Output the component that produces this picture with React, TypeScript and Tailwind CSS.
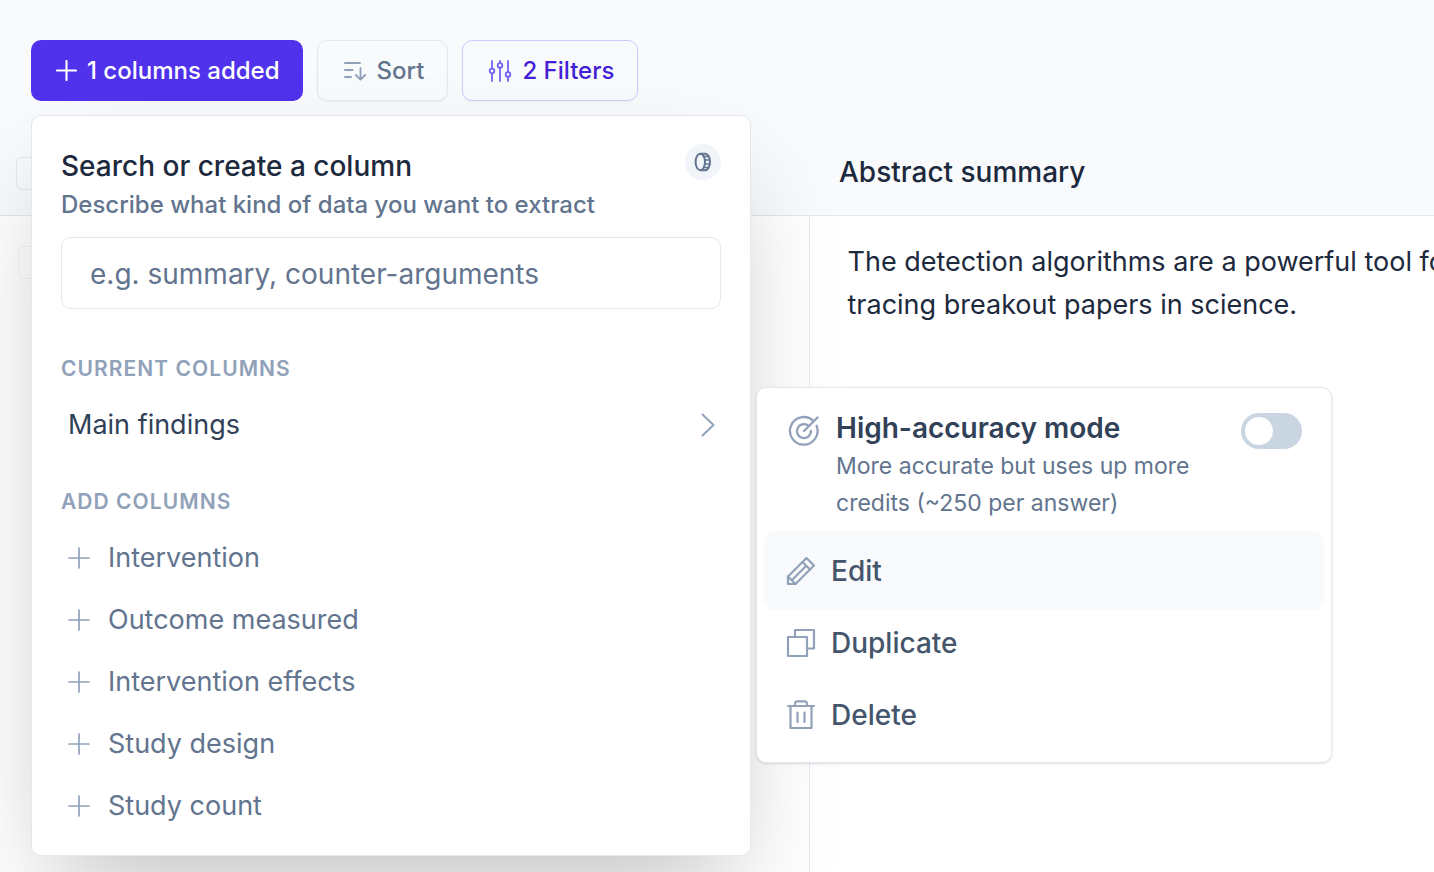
import type { ReactNode } from "react";

const suggestions = [
  "Intervention",
  "Outcome measured",
  "Intervention effects",
  "Study design",
  "Study count",
];

function Icon({ className, box, children, width = 2 }: { className: string; box: string; children: ReactNode; width?: number }) {
  return (
    <svg
      aria-hidden="true"
      className={className}
      viewBox={box}
      fill="none"
      stroke="currentColor"
      strokeWidth={width}
      strokeLinecap="round"
      strokeLinejoin="round"
    >
      {children}
    </svg>
  );
}

function PlusIcon({ className, width }: { className: string; width: number }) {
  return (
    <Icon className={className} box="0 0 22 22" width={width}>
      <path d="M11 1v20M1 11h20" />
    </Icon>
  );
}

function SortIcon() {
  return (
    <Icon className="h-6 w-6 shrink-0 text-slate-400" box="0 0 24 24">
      <path d="M2 4h15M2 11h7.500M2 18h6" />
      <path d="M17.500 9v11.500M12.800 16l4.700 4.700 4.700-4.700" strokeWidth={1.800} />
    </Icon>
  );
}

function FiltersIcon() {
  return (
    <Icon className="h-6 w-6 shrink-0 text-[#7263f0]" box="0 0 24 24" width={1.800}>
      <path d="M4 2v7.600M4 14.400v7.600M12 2v1.900M12 8.700V22M20 2v11M20 17.800V22" />
      <circle cx="4" cy="12" r="2.300" />
      <circle cx="12" cy="6.400" r="2.300" />
      <circle cx="20" cy="15.400" r="2.300" />
    </Icon>
  );
}

function CoinIcon() {
  return (
    <Icon className="h-5 w-5" box="0 0 20 20" width={2}>
      <ellipse cx="7.300" cy="10" rx="4.700" ry="8.300" />
      <path d="M7.500 1.700h4.500c2.800 0 5 3.700 5 8.300s-2.200 8.300-5 8.300H7.500" />
      <path d="M11 4.500h4M12.300 8h4.500M12.300 12h4.500M11 15.500h4" strokeWidth={1.400} />
    </Icon>
  );
}

function TargetIcon() {
  return (
    <Icon className="h-8 w-8" box="0 0 32 32" width={2.300}>
      <path d="M25.200 5.800A13.800 13.800 0 1 0 28.600 10.800" />
      <path d="M19.800 10.200A7 7 0 1 0 23 15.800" />
      <path d="M16 16 29.500 2.500" />
    </Icon>
  );
}

function PencilIcon() {
  return (
    <Icon className="h-8 w-8" box="0 0 32 32" width={2.200}>
      <path d="M3 21.500 21.500 3l7.500 7.500L10.500 29H3z" />
      <path d="M3 21.500l7.500 7.500M17.500 7l7.500 7.500M6.800 25.200 21.200 10.800" />
    </Icon>
  );
}

function DuplicateIcon() {
  return (
    <Icon className="h-8 w-8" box="0 0 32 32" width={2.200}>
      <path d="M3 10h19v19H3z" />
      <path d="M10 10V3h19v18.500h-7" />
    </Icon>
  );
}

function TrashIcon() {
  return (
    <Icon className="h-8 w-8" box="0 0 32 32" width={2.200}>
      <path d="M3 7h26M5.500 7v22h21V7M10 7V4.500a2.200 2.200 0 0 1 2.200-2.200h7.600A2.200 2.200 0 0 1 22 4.500V7M12.500 13.500v9.500M19.500 13.500v9.500" />
    </Icon>
  );
}

function MenuItem({ icon, label, active = false }: { icon: ReactNode; label: string; active?: boolean }) {
  return (
    <button
      type="button"
      className={`flex h-[79px] w-full items-center gap-[14px] rounded-[10px] px-[21px] text-[28px] font-medium text-slate-600 ${active ? "bg-slate-50" : ""}`}
    >
      <span className="text-slate-400">{icon}</span>
      {label}
    </button>
  );
}

function ColumnMenu() {
  return (
    <div className="absolute top-[271px] left-[724px] w-[576px] rounded-[10px] border border-slate-200 bg-white px-[7px] pb-2 shadow-sm">
      <div className="flex items-start pt-5 pr-[22px] pb-[9px] pl-6">
        <span className="mt-[7px] text-slate-400">
          <TargetIcon />
        </span>
        <label htmlFor="accuracy" className="ml-4 flex-1">
          <span className="block text-[28px] leading-10 font-semibold text-slate-700">High-accuracy mode</span>
          <span className="block max-w-[370px] text-[23px] leading-[37px] text-slate-500">
            More accurate but uses up more credits (~250 per answer)
          </span>
        </label>
        <input
          id="accuracy"
          type="checkbox"
          role="switch"
          className="mt-[5px] flex h-9 w-[61px] shrink-0 appearance-none items-center rounded-full bg-slate-300 px-1 before:h-7 before:w-7 before:rounded-full before:bg-white before:content-[''] checked:justify-end checked:bg-indigo-600"
        />
      </div>
      <div className="-space-y-[7px]">
        <MenuItem icon={<PencilIcon />} label="Edit" active />
        <MenuItem icon={<DuplicateIcon />} label="Duplicate" />
        <MenuItem icon={<TrashIcon />} label="Delete" />
      </div>
    </div>
  );
}

function ColumnPanel() {
  return (
    <section className="absolute top-full left-0 z-10 mt-[14px] w-[720px] rounded-[10px] border border-slate-200 bg-white px-[29px] pt-7 pb-[18px] shadow-[0_50px_100px_-24px_rgba(0,0,0,0.25)]">
      <div className="flex items-start justify-between">
        <div>
          <h2 className="text-[28px] leading-[44px] font-medium text-slate-800">Search or create a column</h2>
          <p className="text-2xl leading-[34px] font-medium text-slate-500">
            <label htmlFor="column-search">Describe what kind of data you want to extract</label>
          </p>
        </div>
        <button
          type="button"
          aria-label="Credits"
          className="flex h-9 w-9 items-center justify-center rounded-full bg-slate-100 text-slate-500"
        >
          <CoinIcon />
        </button>
      </div>
      <input
        id="column-search"
        type="text"
        placeholder="e.g. summary, counter-arguments"
        className="mt-[15px] h-[72px] w-full rounded-[10px] border border-slate-200 px-7 pt-0.5 text-[28px] text-slate-800 placeholder:text-slate-500"
      />
      <h3 className="mt-[42px] text-[21px] leading-9 font-semibold tracking-wider text-slate-400 uppercase">Current columns</h3>
      <button type="button" className="mt-2 flex h-[60px] w-full items-center justify-between pr-[5px] pl-[7px] text-[27px] text-slate-700">
        Main findings
        <Icon className="h-6 w-4 text-slate-400" box="0 0 16 24">
          <path d="M2.500 1.500l11 10.500-11 10.500" />
        </Icon>
      </button>
      <h3 className="mt-[29px] text-[21px] leading-9 font-semibold tracking-wider text-slate-400 uppercase">Add columns</h3>
      <ul className="mt-[7px]">
        {suggestions.map((name) => (
          <li key={name}>
            <button type="button" className="flex h-[62px] w-full items-center gap-[18px] pl-[7px] text-[27px] text-slate-500">
              <PlusIcon className="h-[22px] w-[22px] text-slate-400" width={1.700} />
              {name}
            </button>
          </li>
        ))}
      </ul>
      <ColumnMenu />
    </section>
  );
}

export default function App() {
  return (
    <main className="h-screen overflow-hidden bg-white font-['Inter',sans-serif]">
      <div className="bg-slate-50 px-[31px] pt-10 pb-7">
        <div className="relative flex gap-[14px]">
          <button type="button" className="flex h-[61px] items-center gap-[10px] rounded-[10px] bg-[#5032ec] pr-[23px] pl-[25px] text-2xl font-medium text-white">
            <PlusIcon className="h-[21px] w-[21px]" width={2.200} />
            1 columns added
          </button>
          <button type="button" className="flex h-[61px] items-center gap-[10px] rounded-[10px] border border-slate-200 pr-[23px] pl-[25px] text-2xl font-medium text-slate-500 shadow-xs">
            <SortIcon />
            Sort
          </button>
          <button type="button" className="flex h-[61px] items-center gap-[10px] rounded-[10px] border border-[#cfcbfb] pr-[23px] pl-[25px] text-2xl font-medium text-[#431fd6] shadow-xs">
            <FiltersIcon />
            2 Filters
          </button>
          <ColumnPanel />
        </div>
      </div>
      <table className="h-[calc(100vh-129px)] w-full table-fixed border-collapse text-left text-slate-800">
        <thead>
          <tr className="h-[86px] border-b border-slate-200 bg-slate-50">
            <th className="w-[809px] px-4 pt-1">
              <input type="checkbox" aria-label="Select all papers" className="block h-[33px] w-[33px] appearance-none rounded-md border border-slate-200" />
            </th>
            <th className="pt-px pl-[30px] text-[28px] font-medium">Abstract summary</th>
          </tr>
        </thead>
        <tbody>
          <tr className="align-top">
            <td className="px-[18px] pt-[30px]">
              <input type="checkbox" aria-label="Select paper" className="block h-[33px] w-[33px] appearance-none rounded-md border border-slate-100" />
            </td>
            <td className="overflow-hidden border-l border-slate-200 pt-6 pl-[38px] text-[27px]">
              <p className="w-[640px] leading-[43px]">
                The detection algorithms are a powerful tool for tracing breakout papers in science.
              </p>
            </td>
          </tr>
        </tbody>
      </table>
    </main>
  );
}
